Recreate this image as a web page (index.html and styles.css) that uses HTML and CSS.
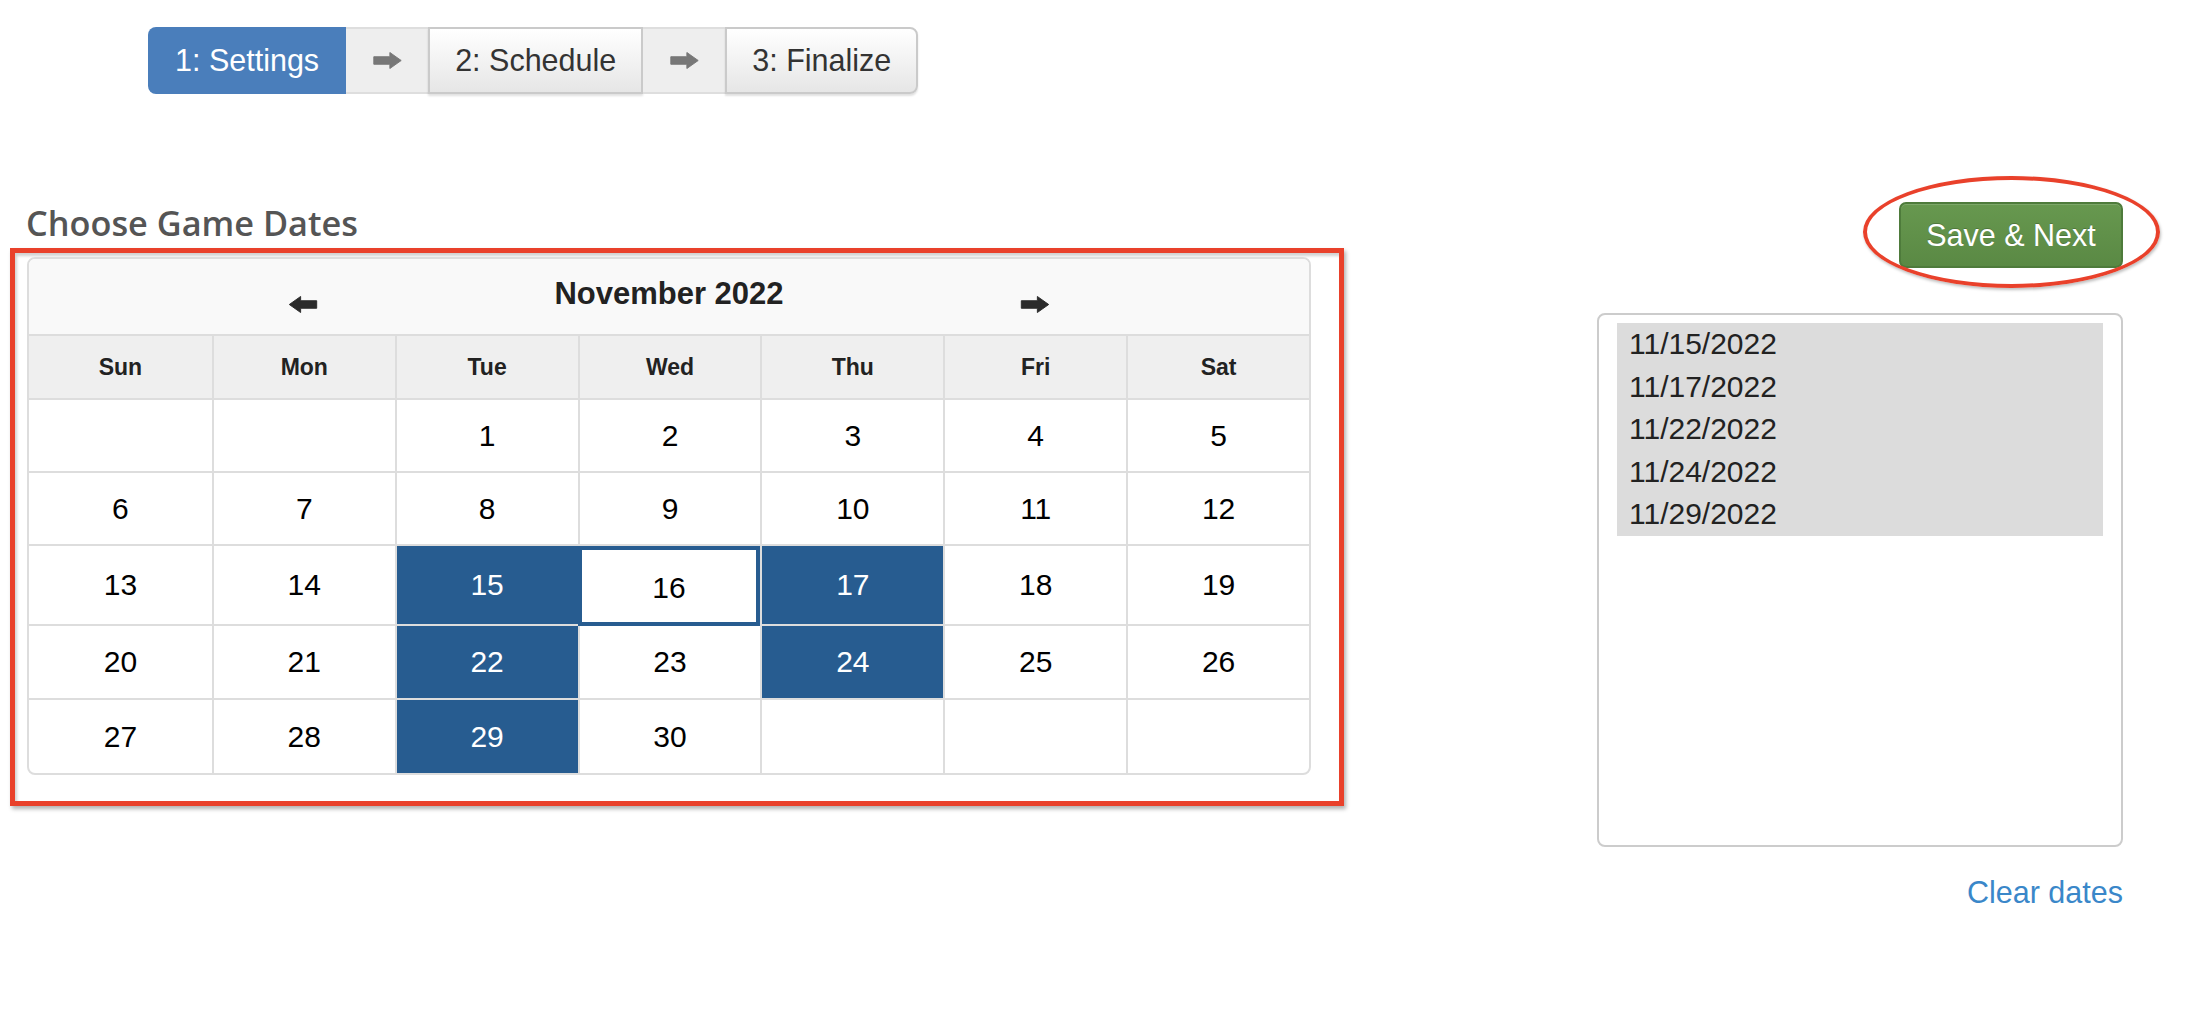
FILE: index.html
```html
<!DOCTYPE html>
<html lang="en">
<head>
<meta charset="utf-8">
<title>Choose Game Dates</title>
<link rel="stylesheet" href="styles.css">
</head>
<body>
<div class="steps">
  <div class="step step-active">1: Settings</div>
  <div class="sep"><svg class="arrow arrow-step" viewBox="0 0 30 18" width="29" height="17"><path d="M29.5 9 L17.5 0.5 V5 H0.5 V13 H17.5 V17.5 Z"/></svg></div>
  <div class="step step-btn">2: Schedule</div>
  <div class="sep"><svg class="arrow arrow-step" viewBox="0 0 30 18" width="29" height="17"><path d="M29.5 9 L17.5 0.5 V5 H0.5 V13 H17.5 V17.5 Z"/></svg></div>
  <div class="step step-btn step-last">3: Finalize</div>
</div>

<div class="main">
  <div class="left">
    <h4 class="title">Choose Game Dates</h4>
    <div class="annot">
      <div class="calendar">
        <div class="cal-head">
          <div class="nav nav-prev"><svg class="arrow arrow-cal" viewBox="0 0 30 18" width="30" height="17"><path d="M0.5 9 L12.5 0.5 V5 H29.5 V13 H12.5 V17.5 Z"/></svg></div>
          <div class="month">November 2022</div>
          <div class="nav nav-next"><svg class="arrow arrow-cal" viewBox="0 0 30 18" width="30" height="17"><path d="M29.5 9 L17.5 0.5 V5 H0.5 V13 H17.5 V17.5 Z"/></svg></div>
        </div>
        <div class="dow">
          <div class="dcell">Sun</div><div class="dcell">Mon</div><div class="dcell">Tue</div><div class="dcell">Wed</div><div class="dcell">Thu</div><div class="dcell">Fri</div><div class="dcell">Sat</div>
        </div>
        <div class="week">
          <div class="cell"></div><div class="cell"></div><div class="cell">1</div><div class="cell">2</div><div class="cell">3</div><div class="cell">4</div><div class="cell">5</div>
        </div>
        <div class="week">
          <div class="cell">6</div><div class="cell">7</div><div class="cell">8</div><div class="cell">9</div><div class="cell">10</div><div class="cell">11</div><div class="cell">12</div>
        </div>
        <div class="week week-tall">
          <div class="cell">13</div><div class="cell">14</div><div class="cell cell-sel">15</div><div class="cell cell-focus">16</div><div class="cell cell-sel">17</div><div class="cell">18</div><div class="cell">19</div>
        </div>
        <div class="week week-mid">
          <div class="cell">20</div><div class="cell">21</div><div class="cell cell-sel">22</div><div class="cell">23</div><div class="cell cell-sel">24</div><div class="cell">25</div><div class="cell">26</div>
        </div>
        <div class="week week-last">
          <div class="cell">27</div><div class="cell">28</div><div class="cell cell-sel">29</div><div class="cell">30</div><div class="cell"></div><div class="cell"></div><div class="cell"></div>
        </div>
      </div>
    </div>
  </div>

  <div class="right">
    <div class="save-wrap">
      <button class="btn-save" type="button">Save &amp; Next</button>
      <span class="ellipse"></span>
    </div>
    <div class="datelist">
      <div class="opt">11/15/2022</div>
      <div class="opt">11/17/2022</div>
      <div class="opt">11/22/2022</div>
      <div class="opt">11/24/2022</div>
      <div class="opt">11/29/2022</div>
    </div>
    <a class="clear" href="#">Clear dates</a>
  </div>
</div>
</body>
</html>
```

FILE: styles.css
```css
body {
  margin: 0;
  width: 2196px;
  background: #fff;
  font-family: "Liberation Sans", Arial, sans-serif;
  color: #222;
}

/* ---------- wizard steps ---------- */
.steps {
  display: flex;
  height: 67px;
  margin: 27px 0 0 148px;
}
.step {
  display: flex;
  align-items: center;
  padding: 0 27px;
  font-size: 30.5px;
  color: #333;
  box-sizing: border-box;
}
.step-active {
  background: #4a7ebb;
  color: #fff;
  border-radius: 8px 0 0 8px;
}
.step-btn {
  padding: 0 25px;
  background: linear-gradient(#ffffff, #e6e6e6);
  border: 2px solid #cacaca;
  box-shadow: 0 2px 2px rgba(0, 0, 0, 0.12);
}
.step-last {
  border-radius: 0 8px 8px 0;
}
.sep {
  width: 82px;
  display: flex;
  align-items: center;
  justify-content: center;
  background: #eeeeee;
  border-top: 2px solid #dedede;
  border-bottom: 2px solid #dedede;
  box-sizing: border-box;
}
.arrow path {
  stroke-linejoin: round;
  stroke-width: 1;
}
.arrow-step path {
  fill: #777;
  stroke: #777;
}
.arrow-cal path {
  fill: #2b2b2b;
  stroke: #2b2b2b;
}

/* ---------- main ---------- */
.main {
  display: flex;
  margin-top: 108px;
}
.left {
  margin-left: 10px;
  width: 1334px;
}
.title {
  margin: 2px 0 5.5px 16px;
  font-family: "Open Sans", sans-serif;
  font-weight: 600;
  font-size: 34.3px;
  line-height: 38.5px;
  color: #555;
}
.annot {
  border: 5px solid #e9412b;
  padding: 4px 28px 26px 12px;
  box-shadow: 2px 3px 4px rgba(0, 0, 0, 0.3), inset 2px 3px 3px rgba(0, 0, 0, 0.18);
}

/* ---------- calendar ---------- */
.calendar {
  width: 1284px;
  box-sizing: border-box;
  border: 2px solid #dddddd;
  border-radius: 8px;
  overflow: hidden;
  background: #fff;
}
.cal-head {
  display: grid;
  grid-template-columns: repeat(7, 1fr);
  height: 77px;
  box-sizing: border-box;
  background: #f9f9f9;
  border-bottom: 2px solid #dddddd;
}
.nav {
  display: flex;
  justify-content: center;
  align-items: flex-start;
  padding-top: 37px;
  grid-row: 1;
}
.nav-prev {
  grid-column: 2;
}
.nav-next {
  grid-column: 6;
}
.month {
  grid-column: 3 / 6;
  grid-row: 1;
  text-align: center;
  padding-top: 19px;
  font-weight: bold;
  font-size: 31px;
  line-height: 31px;
  color: #222;
}
.dow {
  display: grid;
  grid-template-columns: repeat(7, 1fr);
  height: 64px;
  background: #efefef;
  border-bottom: 2px solid #dddddd;
  box-sizing: border-box;
}
.dcell {
  display: flex;
  align-items: center;
  justify-content: center;
  font-weight: bold;
  font-size: 23px;
  color: #222;
  border-left: 2px solid #dddddd;
}
.dcell:first-child {
  border-left: 0;
}
.week {
  display: grid;
  grid-template-columns: repeat(7, 1fr);
  height: 73px;
}
.week-tall {
  height: 80px;
}
.week-mid {
  height: 74px;
}
.week-last {
  height: 73px;
}
.cell {
  display: flex;
  align-items: center;
  justify-content: center;
  font-size: 30px;
  color: #000;
  border-left: 2px solid #dddddd;
  border-bottom: 2px solid #dddddd;
}
.cell:first-child {
  border-left: 0;
}
.week-last .cell {
  border-bottom: 0;
}
.cell-sel {
  background: #275c90;
  color: #fff;
}
.cell-focus {
  border: 4px solid #275c90;
  padding-top: 4px;
}

/* ---------- right column ---------- */
.right {
  margin-left: auto;
  margin-right: 73px;
  width: 526px;
  display: flex;
  flex-direction: column;
  align-items: flex-end;
}
.save-wrap {
  position: relative;
}
.btn-save {
  display: block;
  width: 224px;
  height: 66px;
  padding: 0;
  border: 2px solid #4e7b3b;
  border-radius: 7px;
  background: linear-gradient(#67984f, #5a8944);
  color: #fff;
  font-family: "Liberation Sans", Arial, sans-serif;
  font-size: 30.5px;
  text-shadow: 0 -1px 0 rgba(0, 0, 0, 0.2);
  box-shadow: inset 0 1px 0 rgba(255, 255, 255, 0.15);
}
.ellipse {
  position: absolute;
  left: -36px;
  top: -26px;
  width: 297px;
  height: 112px;
  box-sizing: border-box;
  border: 4px solid #e9412b;
  border-radius: 50%;
  box-shadow: 1px 2px 3px rgba(0, 0, 0, 0.25);
}
.datelist {
  margin-top: 45px;
  width: 526px;
  height: 534px;
  box-sizing: border-box;
  border: 2px solid #cccccc;
  border-radius: 8px;
  padding: 8px 18px;
}
.opt {
  height: 42.6px;
  line-height: 42.6px;
  padding-left: 12px;
  background: #dcdcdc;
  font-size: 30px;
  color: #222;
}
.clear {
  margin-top: 27px;
  font-size: 30.5px;
  line-height: 36px;
  color: #3a87c9;
  text-decoration: none;
}
```
